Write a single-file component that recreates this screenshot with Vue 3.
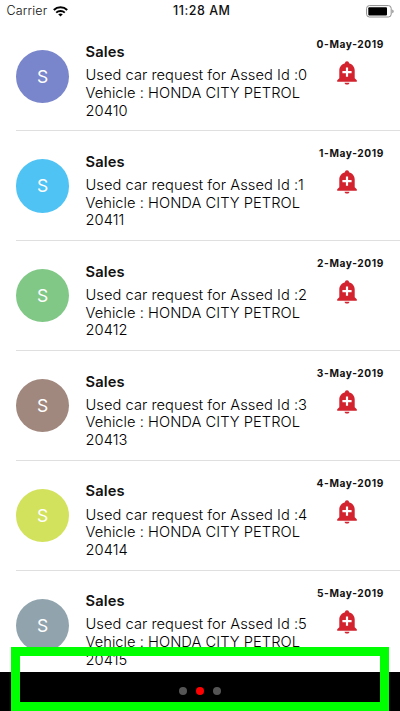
<script setup>
const colors = ['#7a86cb', '#50c3f5', '#81c887', '#a1887e', '#d3e25d', '#91a4ae']
const items = colors.map((color, i) => ({
  color,
  date: `${i}-May-2019`,
  request: `Used car request for Assed Id :${i}`,
  code: `2041${i}`
}))
</script>

<template>
  <div class="screen">
    <header class="status">
      <div class="carrier">
        <span class="carrier-name">Carrier</span>
        <svg class="wifi" viewBox="0 0 15 11" width="15" height="11">
          <path d="M.8 3.900C4.500.500 10.500.500 14.200 3.900" fill="none" stroke="#000" stroke-width="2" />
          <path d="M3.200 6.600C5.600 4.400 9.400 4.400 11.800 6.600" fill="none" stroke="#000" stroke-width="1.900" />
          <path d="M5.200 8.300C6.500 7.200 8.500 7.200 9.800 8.300L7.500 10.600Z" fill="#000" />
        </svg>
      </div>
      <span class="time">11:28 AM</span>
      <svg class="battery" viewBox="0 0 29 13" width="29" height="13">
        <rect x=".6" y=".6" width="24.600" height="11.400" rx="2.800" fill="none" stroke="#8c8c8c" />
        <rect x="2.300" y="2.200" width="18.700" height="8.300" rx="1" fill="#000" />
        <path d="M26.500 4.600c1.300.5 1.300 3.100 0 3.600z" fill="#555" />
      </svg>
    </header>

    <main class="list">
      <article v-for="item in items" :key="item.code" class="row">
        <div class="avatar" :style="{ background: item.color }">S</div>
        <div class="content">
          <div class="details">
            <h2 class="title">Sales</h2>
            <p class="line">{{ item.request }}</p>
            <p class="line">Vehicle : HONDA CITY PETROL</p>
            <p class="line">{{ item.code }}</p>
          </div>
          <div class="meta">
            <span class="date">{{ item.date }}</span>
            <svg class="bell" viewBox="0 0 20 24" width="20" height="24">
              <path d="M10 .2c1.300 0 2 .8 2 2.100 3.500.9 5.700 3.700 5.700 7.300v7.600l2.100 2v1.500H.2v-1.500l2.100-2V9.600c0-3.600 2.200-6.400 5.700-7.300 0-1.300.7-2.100 2-2.100z" fill="#d2232f" />
              <path d="M7.500 21.700h5c-.3 1.200-1.200 1.900-2.500 1.900s-2.200-.7-2.500-1.900z" fill="#d2232f" />
              <path d="M10 6.600v9.200M5.400 11.200h9.200" stroke="#fff" stroke-width="2.200" />
            </svg>
          </div>
        </div>
      </article>
    </main>

    <footer class="pager">
      <i class="dot"></i>
      <i class="dot active"></i>
      <i class="dot"></i>
    </footer>
    <div class="highlight"></div>
  </div>
</template>

<style>
body {
  margin: 0;
  background: #fff;
}
</style>

<style scoped>
.screen {
  position: relative;
  display: flex;
  flex-direction: column;
  width: 400px;
  height: 711px;
  overflow: hidden;
  background: #fff;
  color: #111;
  font-family: Inter, "Liberation Sans", sans-serif;
}
.status {
  display: grid;
  grid-template-columns: 1fr auto 1fr;
  align-items: center;
  flex: none;
  box-sizing: border-box;
  height: 21.600px;
  padding: 0 5px 0 6.500px;
}
.carrier {
  display: flex;
  align-items: center;
  gap: 6px;
}
.carrier-name {
  font-size: 12.500px;
  font-weight: 300;
  line-height: 22px;
  letter-spacing: 0.150px;
  color: #111;
}
.time {
  padding-left: 2px;
  font-size: 12.500px;
  font-weight: 500;
  line-height: 22px;
  letter-spacing: 0.500px;
}
.battery {
  justify-self: end;
}
.list {
  flex: 1;
  min-height: 0;
  overflow: hidden;
}
.row {
  display: flex;
  box-sizing: border-box;
  height: 109.800px;
  padding-left: 16px;
}
.avatar {
  flex: none;
  width: 53.300px;
  height: 53.300px;
  margin-top: 28px;
  border-radius: 50%;
  color: #fff;
  font-size: 17.500px;
  line-height: 54px;
  text-align: center;
}
.content {
  display: flex;
  justify-content: space-between;
  flex: 1;
  margin-left: -53.300px;
  padding-left: 69.500px;
  padding-right: 16px;
  border-bottom: 1px solid #dfdfdf;
}
.details {
  padding-top: 21.600px;
  white-space: nowrap;
}
.title {
  margin: 0 0 6.200px;
  font-size: 14.700px;
  font-weight: 600;
  line-height: 18px;
  letter-spacing: 0.150px;
}
.line {
  margin: 0;
  color: #000;
  font-size: 14.700px;
  font-weight: 300;
  line-height: 17.600px;
  letter-spacing: 0.030px;
}
.meta {
  display: flex;
  flex-direction: column;
  align-items: flex-end;
  width: 72px;
  padding-top: 16px;
}
.date {
  font-size: 10.200px;
  font-weight: 700;
  line-height: 13px;
  letter-spacing: 0.600px;
  white-space: nowrap;
}
.bell {
  margin: 10px 27px 0 0;
}
.pager {
  display: flex;
  align-items: center;
  justify-content: center;
  gap: 9px;
  flex: none;
  box-sizing: border-box;
  height: 39px;
  padding-bottom: 1px;
  background: #000;
}
.dot {
  width: 8px;
  height: 8px;
  border-radius: 50%;
  background: #555;
}
.dot.active {
  background: #f00;
}
.highlight {
  position: absolute;
  left: 11px;
  top: 647px;
  box-sizing: border-box;
  width: 377.500px;
  height: 64px;
  border: 9px solid #0f0;
}
</style>
